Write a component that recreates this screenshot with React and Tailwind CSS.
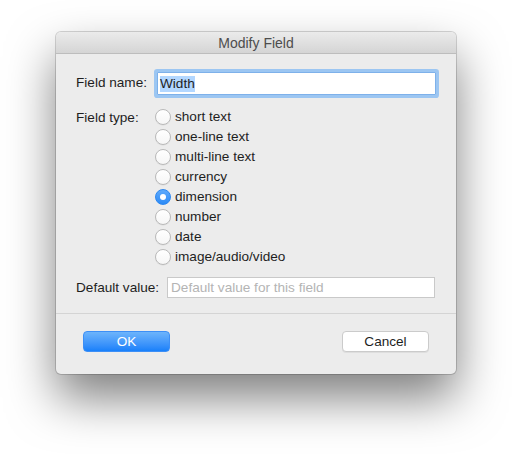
const types = [
  'short text',
  'one-line text',
  'multi-line text',
  'currency',
  'dimension',
  'number',
  'date',
  'image/audio/video',
];

function Radio({ checked }) {
  if (checked) {
    return (
      <span className="flex h-[16px] w-[16px] shrink-0 items-center justify-center rounded-full border border-[#2c87f0] bg-gradient-to-b from-[#5eaafc] to-[#2a8af6]">
        <span className="h-[6px] w-[6px] rounded-full bg-white" />
      </span>
    );
  }
  return (
    <span className="h-[16px] w-[16px] shrink-0 rounded-full border border-[#b9b9b9] bg-gradient-to-b from-white to-[#f6f6f6] shadow-[0_0.5px_0.5px_rgba(0,0,0,0.08)]" />
  );
}

export default function App() {
  return (
    <div
      className="h-[454px] w-[512px] bg-white pl-[56px] pt-[32px] text-[13.6px] text-[#1e1e1e]"
      style={{ fontFamily: '"Liberation Sans", Arial, sans-serif' }}
    >
      <div className="flex h-[342px] w-[400px] flex-col overflow-hidden rounded-[5px] bg-[#ececec] shadow-[0_24px_48px_rgba(0,0,0,0.5),0_0_0_1px_rgba(0,0,0,0.16)]">
        {/* Title bar */}
        <div className="h-[22px] shrink-0 border-b border-[#bdbdbd] bg-gradient-to-b from-[#ebebeb] to-[#d5d5d5] pt-px text-center text-[14px] leading-[21px] text-[#4d4d4d]">
          Modify Field
        </div>

        {/* Form */}
        <div className="flex flex-col px-[20px]">
          <div className="mt-[18px] flex h-[23px] items-center">
            <div className="w-[81px]">Field name:</div>
            <div className="flex h-[23px] w-[279px] items-center rounded-[1px] border border-[#7eb1ea] bg-white pl-[2px] shadow-[0_0_0_3px_#9cc6f2]">
              <span className="bg-[#b3d7ff] leading-[16px]">Width</span>
            </div>
          </div>

          <div className="mt-[12px] flex">
            <div className="w-[79px] pt-px leading-[20px]">Field type:</div>
            <div className="flex flex-col">
              {types.map((t) => (
                <div key={t} className="flex h-[20px] items-center gap-[4px]">
                  <Radio checked={t === 'dimension'} />
                  <span className="pt-px">{t}</span>
                </div>
              ))}
            </div>
          </div>

          <div className="mt-[10px] flex h-[21px] items-center">
            <div className="w-[91px] pt-px">Default value:</div>
            <div className="flex h-[21px] w-[268px] items-center border border-[#c9c9c9] bg-white pl-[3px] pt-px text-[#b4b4b4]">
              Default value for this field
            </div>
          </div>
        </div>

        <div className="mt-[15px] h-px bg-[#d4d4d4]" />

        {/* Buttons */}
        <div className="flex justify-between px-[27px] pt-[17px]">
          <button className="h-[21px] w-[87px] rounded-[4px] border border-[#3d8ff6] bg-gradient-to-b from-[#6db4fb] to-[#1780fa] text-white">
            OK
          </button>
          <button className="h-[21px] w-[87px] rounded-[4px] border border-[#cbcbcb] bg-white text-[#1e1e1e] shadow-[0_1px_0_rgba(0,0,0,0.06)]">
            Cancel
          </button>
        </div>
      </div>
    </div>
  );
}
